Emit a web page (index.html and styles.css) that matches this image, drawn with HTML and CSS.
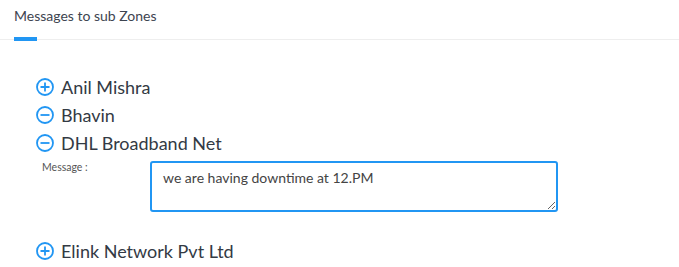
FILE: index.html
```html
<!DOCTYPE html>
<html>
<head>
<meta charset="utf-8">
<link rel="stylesheet" href="styles.css">
</head>
<body>
<div class="panel">
  <div class="tabs">
    <div class="tab-title">Messages to sub Zones</div>
    <div class="tab-bar"></div>
  </div>
  <ul class="zones">
    <li class="zone">
      <svg class="toggle" viewBox="0 0 18 18" width="18" height="18"><circle cx="9" cy="9" r="8" fill="none" stroke="#2196f3" stroke-width="1.8"/><path d="M4.5 9h9M9 4.5v9" stroke="#2196f3" stroke-width="1.8"/></svg>
      <span class="zone-name">Anil Mishra</span>
    </li>
    <li class="zone">
      <svg class="toggle" viewBox="0 0 18 18" width="18" height="18"><circle cx="9" cy="9" r="8" fill="none" stroke="#2196f3" stroke-width="1.8"/><path d="M4.5 9h9" stroke="#2196f3" stroke-width="1.8"/></svg>
      <span class="zone-name">Bhavin</span>
    </li>
    <li class="zone">
      <svg class="toggle" viewBox="0 0 18 18" width="18" height="18"><circle cx="9" cy="9" r="8" fill="none" stroke="#2196f3" stroke-width="1.8"/><path d="M4.5 9h9" stroke="#2196f3" stroke-width="1.8"/></svg>
      <span class="zone-name">DHL Broadband Net</span>
    </li>
    <li class="message-row">
      <label class="message-label">Message :</label>
      <textarea class="message-input">we are having downtime at 12.PM</textarea>
    </li>
    <li class="zone zone-last">
      <svg class="toggle" viewBox="0 0 18 18" width="18" height="18"><circle cx="9" cy="9" r="8" fill="none" stroke="#2196f3" stroke-width="1.8"/><path d="M4.5 9h9M9 4.5v9" stroke="#2196f3" stroke-width="1.8"/></svg>
      <span class="zone-name">Elink Network Pvt Ltd</span>
    </li>
  </ul>
</div>
</body>
</html>
```
FILE: styles.css
```css
* { box-sizing: border-box; }
html, body { margin: 0; padding: 0; background: #fff; }
body { font-family: Lato, "Open Sans", sans-serif; color: #333; width: 679px; height: 267px; overflow: hidden; }
.panel { display: flex; flex-direction: column; }
.tabs { display: flex; flex-direction: column; padding-left: 14px; border-bottom: 1px solid #eee; }
.tab-title { font-size: 14px; color: #3d4450; line-height: 16px; padding-top: 8px; height: 37px; }
.tab-bar { width: 23px; height: 4px; background: #2196f3; margin-bottom: -2px; }
.zones { list-style: none; margin: 0; padding: 33px 0 0 36px; }
.zone { display: flex; align-items: center; gap: 7px; height: 28px; }
.toggle { flex: none; }
.zone-name { font-size: 18px; color: #333a44; }
.message-row { display: flex; align-items: flex-start; padding: 4px 0 0 6px; height: 80px; }
.message-label { font-size: 10.5px; color: #555; width: 108px; padding-top: 0; }
.message-input { width: 408px; height: 51px; border: 2px solid #2196f3; border-radius: 3px; font-family: Lato, sans-serif; font-size: 14px; color: #444; padding: 6px 11px; resize: vertical; outline: none; }
```
